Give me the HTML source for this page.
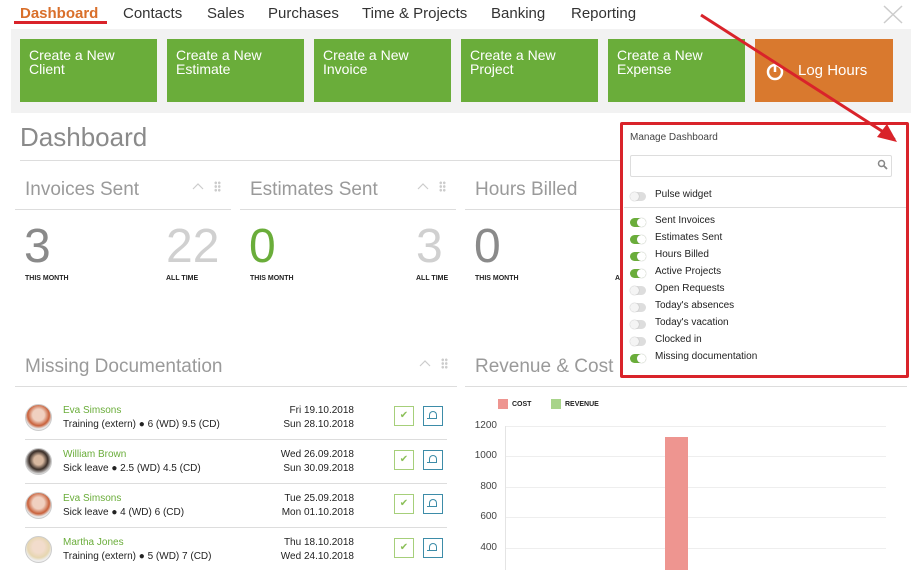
<!DOCTYPE html>
<html><head><meta charset="utf-8"><style>
*{margin:0;padding:0;box-sizing:border-box}
body{width:920px;height:570px;overflow:hidden;background:#fff;font-family:"Liberation Sans",sans-serif;position:relative;color:#333}
.a{position:absolute;white-space:nowrap}
.nav{top:5px;font-size:15px;color:#333}
.tile{position:absolute;top:39px;width:137px;height:63px;background:#6aad3a;color:#fff;font-size:14px;line-height:14px;padding:9px 0 0 9px}
.wt{font-size:19px;color:#9a9a9a}
.ln{position:absolute;height:1px;background:#ddd}
.big{font-size:48px;line-height:48px}
.lbl{font-size:7px;font-weight:bold;color:#222}
.chev{position:absolute}
.dots{position:absolute;width:7px;height:11px;background:radial-gradient(circle,#ccc 1.2px,transparent 1.5px) 0 0/3.5px 3.7px}
.av{position:absolute;left:25px;width:27px;height:27px;border-radius:50%;border:1px solid #ccc}
.nm{font-size:10px;color:#6aad3a}
.ds{font-size:10px;color:#222}
.dt{font-size:10px;color:#222;text-align:right;width:120px}
.ck{position:absolute;left:394px;width:20px;height:20px;border:1.5px solid #a6cf7a;color:#8cc05a;font-size:10px;text-align:center;line-height:17px}
.bl{position:absolute;left:423px;width:20px;height:20px;border:1.5px solid #3d8ca8}
.bl:after{content:"";position:absolute;left:5px;top:4px;width:6px;height:7px;border:1px solid #3d8ca8;border-radius:4px 4px 0 0;border-bottom:none}
.bl:before{content:"";position:absolute;left:3px;top:11px;width:10px;height:1px;background:#3d8ca8}
.tg{position:absolute;left:630px;width:16px;height:9px;border-radius:5px;background:#ddd}
.tg:after{content:"";position:absolute;top:0;left:0;width:9px;height:9px;border-radius:50%;background:#f4f4f4;box-shadow:0 0 1px #999}
.tg.on{background:#6aad3a}
.tg.on:after{left:7px;background:#fff}
.it{left:655px;font-size:10px;color:#222}
.yl{font-size:10px;color:#444;text-align:right;width:24px;left:473px}
.gl{position:absolute;left:505px;width:381px;height:1px;background:#eee}
</style></head><body>
<div class="a nav" style="left:20px;color:#d96f2a;font-weight:bold">Dashboard</div>
<div style="position:absolute;left:14px;top:21px;width:93px;height:3px;background:#d9232a"></div>
<div class="a nav" style="left:123px">Contacts</div>
<div class="a nav" style="left:207px">Sales</div>
<div class="a nav" style="left:268px">Purchases</div>
<div class="a nav" style="left:362px">Time &amp; Projects</div>
<div class="a nav" style="left:491px">Banking</div>
<div class="a nav" style="left:571px">Reporting</div>
<svg class="a" style="left:882px;top:5px" width="22" height="19"><path d="M2 1L20 18M20 1L2 18" stroke="#ccc" stroke-width="1.5"/></svg>
<div style="position:absolute;left:11px;top:29px;width:900px;height:84px;background:#f2f2f2"></div>
<div class="tile" style="left:20px">Create a New<br>Client</div>
<div class="tile" style="left:167px">Create a New<br>Estimate</div>
<div class="tile" style="left:314px">Create a New<br>Invoice</div>
<div class="tile" style="left:461px">Create a New<br>Project</div>
<div class="tile" style="left:608px">Create a New<br>Expense</div>
<div class="tile" style="left:755px;width:138px;background:#d9792e;font-size:15px;padding:25px 0 0 43px">Log Hours</div>
<svg class="a" style="left:765px;top:60px" width="20" height="22"><circle cx="10" cy="12" r="7" fill="none" stroke="#fff" stroke-width="2.5"/><path d="M10 3v9" stroke="#fff" stroke-width="2.5"/></svg>

<div class="a" style="left:20px;top:122px;font-size:26px;color:#8a8a8a">Dashboard</div>
<div class="ln" style="left:20px;top:160px;width:600px"></div>

<div class="a wt" style="left:25px;top:179px">Invoices Sent</div>
<svg class="chev" style="left:192px;top:183px" width="12" height="7"><path d="M1 6L6 1L11 6" fill="none" stroke="#ccc" stroke-width="1.2"/></svg><div class="dots" style="left:214px;top:181px"></div>
<div class="ln" style="left:15px;top:209px;width:216px"></div>
<div class="a wt" style="left:250px;top:179px">Estimates Sent</div>
<svg class="chev" style="left:417px;top:183px" width="12" height="7"><path d="M1 6L6 1L11 6" fill="none" stroke="#ccc" stroke-width="1.2"/></svg><div class="dots" style="left:439px;top:181px"></div>
<div class="ln" style="left:240px;top:209px;width:216px"></div>
<div class="a wt" style="left:475px;top:179px">Hours Billed</div>
<div class="ln" style="left:465px;top:209px;width:160px"></div>

<div class="a big" style="left:24px;top:223px;color:#8a8a8a">3</div>
<div class="a big" style="left:166px;top:223px;color:#d0d0d0">22</div>
<div class="a big" style="left:249px;top:223px;color:#6aad3a">0</div>
<div class="a big" style="left:416px;top:223px;color:#d0d0d0">3</div>
<div class="a big" style="left:474px;top:223px;color:#8a8a8a">0</div>
<div class="a lbl" style="left:25px;top:275px">THIS MONTH</div>
<div class="a lbl" style="left:166px;top:275px">ALL TIME</div>
<div class="a lbl" style="left:250px;top:275px">THIS MONTH</div>
<div class="a lbl" style="left:416px;top:275px">ALL TIME</div>
<div class="a lbl" style="left:475px;top:275px">THIS MONTH</div>
<div class="a lbl" style="left:615px;top:275px">A</div>

<div class="a wt" style="left:25px;top:356px">Missing Documentation</div>
<svg class="chev" style="left:419px;top:360px" width="12" height="7"><path d="M1 6L6 1L11 6" fill="none" stroke="#ccc" stroke-width="1.2"/></svg><div class="dots" style="left:441px;top:358px"></div>
<div class="ln" style="left:15px;top:386px;width:442px"></div>
<div class="a wt" style="left:475px;top:356px">Revenue &amp; Cost</div>
<div class="ln" style="left:465px;top:386px;width:442px"></div>

<div class="av" style="top:404px;background:radial-gradient(circle at 50% 40%,#f0d0c0 30%,#c8603a 55%,#e8e8e8 70%)"></div>
<div class="a nm" style="left:63px;top:405px">Eva Simsons</div>
<div class="a ds" style="left:63px;top:419px">Training (extern) ● 6 (WD) 9.5 (CD)</div>
<div class="a dt" style="left:234px;top:405px">Fri 19.10.2018</div>
<div class="a dt" style="left:234px;top:419px">Sun 28.10.2018</div>
<div class="ck" style="top:406px">✔</div><div class="bl" style="top:406px"></div>
<div class="ln" style="left:25px;top:439px;width:422px"></div>

<div class="av" style="top:448px;background:radial-gradient(circle at 50% 45%,#d8b8a0 25%,#3a2e28 50%,#e8e8e8 75%)"></div>
<div class="a nm" style="left:63px;top:449px">William Brown</div>
<div class="a ds" style="left:63px;top:463px">Sick leave ● 2.5 (WD) 4.5 (CD)</div>
<div class="a dt" style="left:234px;top:449px">Wed 26.09.2018</div>
<div class="a dt" style="left:234px;top:463px">Sun 30.09.2018</div>
<div class="ck" style="top:450px">✔</div><div class="bl" style="top:450px"></div>
<div class="ln" style="left:25px;top:483px;width:422px"></div>

<div class="av" style="top:492px;background:radial-gradient(circle at 50% 40%,#f0d0c0 30%,#c8603a 55%,#e8e8e8 70%)"></div>
<div class="a nm" style="left:63px;top:493px">Eva Simsons</div>
<div class="a ds" style="left:63px;top:507px">Sick leave ● 4 (WD) 6 (CD)</div>
<div class="a dt" style="left:234px;top:493px">Tue 25.09.2018</div>
<div class="a dt" style="left:234px;top:507px">Mon 01.10.2018</div>
<div class="ck" style="top:494px">✔</div><div class="bl" style="top:494px"></div>
<div class="ln" style="left:25px;top:527px;width:422px"></div>

<div class="av" style="top:536px;background:radial-gradient(circle at 50% 40%,#f2dccc 30%,#e6d6b0 55%,#eee 70%)"></div>
<div class="a nm" style="left:63px;top:537px">Martha Jones</div>
<div class="a ds" style="left:63px;top:551px">Training (extern) ● 5 (WD) 7 (CD)</div>
<div class="a dt" style="left:234px;top:537px">Thu 18.10.2018</div>
<div class="a dt" style="left:234px;top:551px">Wed 24.10.2018</div>
<div class="ck" style="top:538px">✔</div><div class="bl" style="top:538px"></div>

<div style="position:absolute;left:498px;top:399px;width:10px;height:10px;background:#ee9590"></div>
<div class="a lbl" style="left:512px;top:401px">COST</div>
<div style="position:absolute;left:551px;top:399px;width:10px;height:10px;background:#a8d48a"></div>
<div class="a lbl" style="left:565px;top:401px">REVENUE</div>
<div class="gl" style="top:426px"></div><div class="gl" style="top:456px"></div><div class="gl" style="top:487px"></div><div class="gl" style="top:517px"></div><div class="gl" style="top:548px"></div>
<div style="position:absolute;left:505px;top:426px;width:1px;height:144px;background:#e4e4e4"></div>
<div class="a yl" style="top:420px">1200</div>
<div class="a yl" style="top:450px">1000</div>
<div class="a yl" style="top:481px">800</div>
<div class="a yl" style="top:511px">600</div>
<div class="a yl" style="top:542px">400</div>
<div style="position:absolute;left:665px;top:437px;width:23px;height:133px;background:#ee9590"></div>

<div style="position:absolute;left:620px;top:122px;width:289px;height:256px;background:#fff;border:3px solid #d9232a;border-radius:2px"></div>
<div class="a" style="left:630px;top:132px;font-size:10px;color:#444">Manage Dashboard</div>
<svg class="a" style="left:886px;top:133px" width="10" height="7"><path d="M1 6L5 2L9 6" fill="none" stroke="#222" stroke-width="1.3"/></svg>
<div style="position:absolute;left:630px;top:155px;width:262px;height:22px;border:1px solid #ddd;border-radius:2px"></div>
<svg class="a" style="left:877px;top:159px" width="11" height="11"><circle cx="4.5" cy="4.5" r="3" fill="none" stroke="#888" stroke-width="1.5"/><path d="M7 7L10 10" stroke="#888" stroke-width="1.8"/></svg>
<div class="tg" style="top:192px"></div><div class="a it" style="top:189px">Pulse widget</div>
<div class="ln" style="left:624px;top:207px;width:282px"></div>
<div class="tg on" style="top:218px"></div><div class="a it" style="top:215px">Sent Invoices</div>
<div class="tg on" style="top:235px"></div><div class="a it" style="top:232px">Estimates Sent</div>
<div class="tg on" style="top:252px"></div><div class="a it" style="top:249px">Hours Billed</div>
<div class="tg on" style="top:269px"></div><div class="a it" style="top:266px">Active Projects</div>
<div class="tg" style="top:286px"></div><div class="a it" style="top:283px">Open Requests</div>
<div class="tg" style="top:303px"></div><div class="a it" style="top:300px">Today's absences</div>
<div class="tg" style="top:320px"></div><div class="a it" style="top:317px">Today's vacation</div>
<div class="tg" style="top:337px"></div><div class="a it" style="top:334px">Clocked in</div>
<div class="tg on" style="top:354px"></div><div class="a it" style="top:351px">Missing documentation</div>

<svg class="a" style="left:0;top:0" width="920" height="570"><path d="M701 15L885 133" stroke="#d9232a" stroke-width="3"/><path d="M897 142L877 137L887 124Z" fill="#d9232a"/></svg>
</body></html>
